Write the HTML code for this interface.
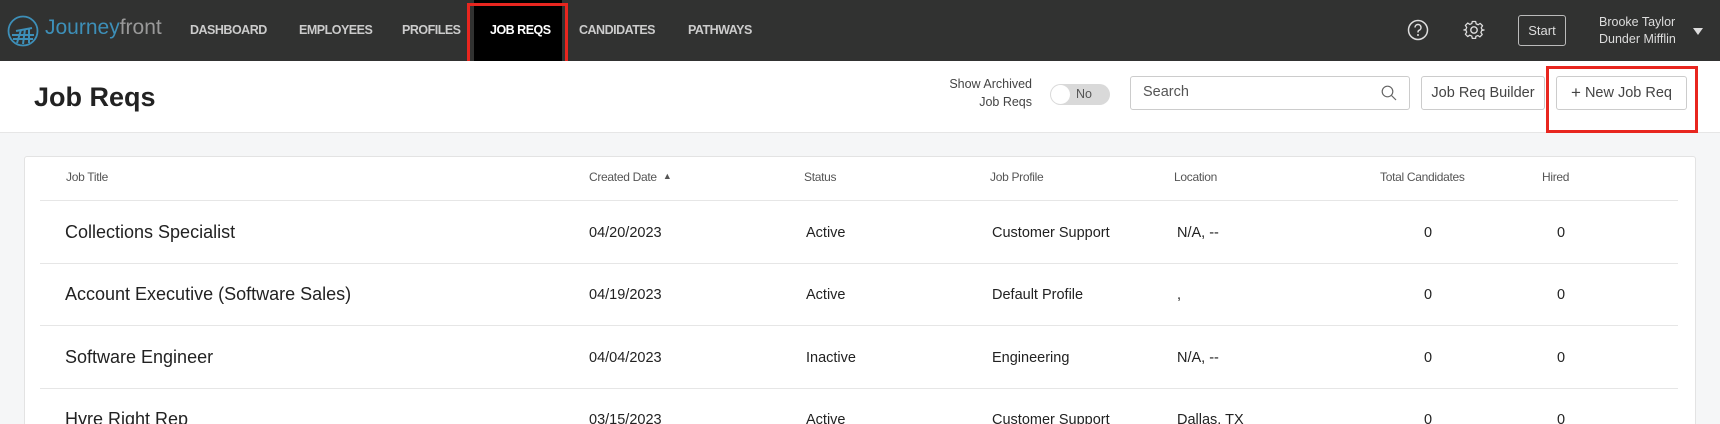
<!DOCTYPE html>
<html style="width:1720px;height:424px;overflow:hidden"><head><meta charset="utf-8"><style>
*{margin:0;padding:0;box-sizing:border-box}
body{width:1720px;height:424px;overflow:hidden;background:#f5f6f7;font-family:"Liberation Sans",sans-serif;position:relative;color:#222}
.a{position:absolute;white-space:nowrap}
.nav{position:absolute;left:0;top:0;width:1720px;height:61px;background:#313231}
.ni{position:absolute;top:23px;font-size:12.5px;color:#ccc;font-weight:bold;letter-spacing:-0.5px}
.hdr{position:absolute;left:0;top:61px;width:1720px;height:72px;background:#fff;border-bottom:1px solid #e6e6e6}
.card{position:absolute;left:24px;top:156px;width:1672px;height:300px;background:#fff;border:1px solid #e3e3e3;border-radius:3px}
.th{position:absolute;top:170px;font-size:12px;color:#555;letter-spacing:-0.3px}
.hl{position:absolute;left:40px;width:1638px;height:1px;background:#e6e6e6}
.t{position:absolute;font-size:18px;color:#222}
.c{position:absolute;font-size:14.5px;color:#222}
.btn{position:absolute;top:76px;height:34px;border:1px solid #ccc;border-radius:3px;background:#fff;font-size:14.5px;color:#444;text-align:center;line-height:32px}
</style></head><body>
<div class="nav"></div>
<svg class="a" style="left:7px;top:15px" width="32" height="32" viewBox="0 0 32 32"><circle cx="16" cy="16" r="14.5" fill="none" stroke="#3d8fb8" stroke-width="1.8"/><path d="M5 20 L27 20 M6 24 L26 24 M9 16 L25 13 M10 28 L14 15 M16 29 L18 14 M22 28 L22 13" stroke="#3d8fb8" stroke-width="2" fill="none"/></svg>
<div class="a" style="left:45px;top:16px;font-size:21px;color:#3d8fb8">Journey<span style="color:#999">front</span></div>
<div class="ni" style="left:190px">DASHBOARD</div>
<div class="ni" style="left:299px">EMPLOYEES</div>
<div class="ni" style="left:402px">PROFILES</div>
<div class="a" style="left:474px;top:0;width:88px;height:61px;background:#000"></div>
<div class="ni" style="left:490px;color:#fff">JOB REQS</div>
<div class="ni" style="left:579px">CANDIDATES</div>
<div class="ni" style="left:688px">PATHWAYS</div>
<div class="a" style="left:467px;top:3px;width:101px;height:64px;border:3px solid #e8261f"></div>
<svg class="a" style="left:1407px;top:19px" width="22" height="22" viewBox="0 0 22 22"><circle cx="11" cy="11" r="9.5" fill="none" stroke="#ddd" stroke-width="1.5"/><path d="M8 8.5 a3 3 0 1 1 4 2.8 c-1 .4 -1 1 -1 2.2" fill="none" stroke="#ddd" stroke-width="1.5"/><circle cx="11" cy="16" r="1" fill="#ddd"/></svg>
<svg class="a" style="left:1463px;top:19px" width="22" height="22" viewBox="0 0 24 24"><path d="M10 2h4l.6 2.8 2.4 1 2.4-1.6 2.8 2.8-1.6 2.4 1 2.4L24 12v0l-2.8.6-1 2.4 1.6 2.4-2.8 2.8-2.4-1.6-2.4 1L14 22h-4l-.6-2.8-2.4-1-2.4 1.6-2.8-2.8L3.4 14.6l-1-2.4L0 12l2.4-.6 1-2.4L1.8 6.6l2.8-2.8L7 5.4l2.4-1z" transform="scale(.92) translate(1 1)" fill="none" stroke="#ddd" stroke-width="1.5" stroke-linejoin="round"/><circle cx="12" cy="12" r="3.5" fill="none" stroke="#ddd" stroke-width="1.5"/></svg>
<div class="a" style="left:1518px;top:15px;width:48px;height:31px;border:1px solid #bbb;border-radius:3px;color:#ddd;font-size:13px;text-align:center;line-height:29px">Start</div>
<div class="a" style="left:1599px;top:14px;font-size:12.5px;color:#ddd;line-height:17px">Brooke Taylor<br>Dunder Mifflin</div>
<div class="a" style="left:1693px;top:28px;width:0;height:0;border-left:5.5px solid transparent;border-right:5.5px solid transparent;border-top:7px solid #ddd"></div>
<div class="hdr"></div>
<div class="a" style="left:34px;top:82px;font-size:27px;font-weight:bold;color:#222">Job Reqs</div>
<div class="a" style="left:930px;top:75px;width:102px;text-align:right;font-size:12.5px;color:#444;line-height:18px;white-space:normal">Show Archived<br>Job Reqs</div>
<div class="a" style="left:1050px;top:84px;width:60px;height:21px;border-radius:11px;background:#d9d9d9"></div>
<div class="a" style="left:1051px;top:85px;width:19px;height:19px;border-radius:50%;background:#fff"></div>
<div class="a" style="left:1076px;top:87px;font-size:12.5px;color:#555">No</div>
<div class="a" style="left:1130px;top:76px;width:280px;height:34px;border:1px solid #ccc;border-radius:3px;background:#fff"></div>
<div class="a" style="left:1143px;top:84px;font-size:14.5px;color:#555">Search</div>
<svg class="a" style="left:1381px;top:85px" width="16" height="16" viewBox="0 0 16 16"><circle cx="6.5" cy="6.5" r="5.3" fill="none" stroke="#666" stroke-width="1.2"/><path d="M10.5 10.5 L15 15" stroke="#666" stroke-width="1.2"/></svg>
<div class="btn" style="left:1421px;width:124px">Job Req Builder</div>
<div class="btn" style="left:1556px;width:131px"><span style="font-size:17px;vertical-align:-1px">+</span> New Job Req</div>
<div class="a" style="left:1546px;top:66px;width:152px;height:67px;border:3px solid #e8261f"></div>
<div class="card"></div>
<div class="th" style="left:66px">Job Title</div>
<div class="th" style="left:589px">Created Date <span style="font-size:9px;position:relative;top:-2px;margin-left:3px">▲</span></div>
<div class="th" style="left:804px">Status</div>
<div class="th" style="left:990px">Job Profile</div>
<div class="th" style="left:1174px">Location</div>
<div class="th" style="left:1380px">Total Candidates</div>
<div class="th" style="left:1542px">Hired</div>
<div class="hl" style="top:200px"></div>
<div class="hl" style="top:263px"></div>
<div class="hl" style="top:325px"></div>
<div class="hl" style="top:388px"></div>

<div class="t" style="left:65px;top:222px">Collections Specialist</div>
<div class="c" style="left:589px;top:225px">04/20/2023</div>
<div class="c" style="left:806px;top:225px">Active</div>
<div class="c" style="left:992px;top:225px">Customer Support</div>
<div class="c" style="left:1177px;top:225px">N/A, --</div>
<div class="c" style="left:1424px;top:225px">0</div>
<div class="c" style="left:1557px;top:225px">0</div>

<div class="t" style="left:65px;top:284px">Account Executive (Software Sales)</div>
<div class="c" style="left:589px;top:287px">04/19/2023</div>
<div class="c" style="left:806px;top:287px">Active</div>
<div class="c" style="left:992px;top:287px">Default Profile</div>
<div class="c" style="left:1177px;top:287px">,</div>
<div class="c" style="left:1424px;top:287px">0</div>
<div class="c" style="left:1557px;top:287px">0</div>

<div class="t" style="left:65px;top:347px">Software Engineer</div>
<div class="c" style="left:589px;top:350px">04/04/2023</div>
<div class="c" style="left:806px;top:350px">Inactive</div>
<div class="c" style="left:992px;top:350px">Engineering</div>
<div class="c" style="left:1177px;top:350px">N/A, --</div>
<div class="c" style="left:1424px;top:350px">0</div>
<div class="c" style="left:1557px;top:350px">0</div>

<div class="t" style="left:65px;top:409px">Hyre Right Rep</div>
<div class="c" style="left:589px;top:412px">03/15/2023</div>
<div class="c" style="left:806px;top:412px">Active</div>
<div class="c" style="left:992px;top:412px">Customer Support</div>
<div class="c" style="left:1177px;top:412px">Dallas, TX</div>
<div class="c" style="left:1424px;top:412px">0</div>
<div class="c" style="left:1557px;top:412px">0</div>
</body></html>
